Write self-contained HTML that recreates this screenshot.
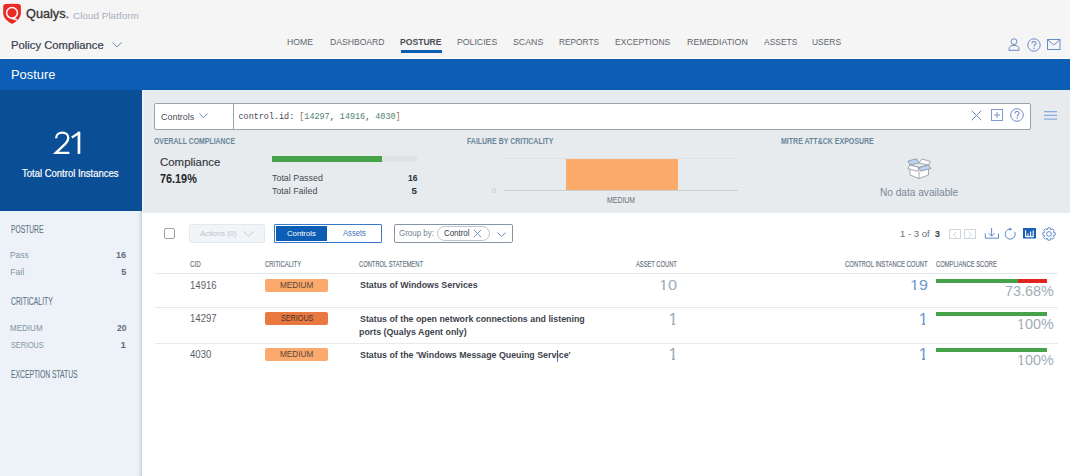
<!DOCTYPE html>
<html><head><meta charset="utf-8">
<style>
*{margin:0;padding:0;box-sizing:border-box;}
html,body{width:1070px;height:476px;overflow:hidden;background:#fff;font-family:"Liberation Sans",sans-serif;}
.a{position:absolute;white-space:nowrap;line-height:1;transform-origin:0 0;}
.r{position:absolute;}
svg{position:absolute;overflow:visible;}
</style></head><body>
<div class="r" style="left:0;top:0;width:1070px;height:59px;background:#f5f5f5;"></div><div class="r" style="left:0;top:58px;width:1070px;height:1px;background:#fdfdfd;"></div>
<div class="r" style="left:0;top:59px;width:1070px;height:31px;background:#0c5db4;"></div>
<div class="r" style="left:0;top:90px;width:142px;height:121px;background:#0a4e95;"></div>
<div class="r" style="left:142px;top:90px;width:928px;height:123px;background:#e7ebee;"></div><div class="r" style="left:142px;top:90px;width:1.5px;height:121px;background:#eef2f6;"></div>
<div class="r" style="left:0;top:211px;width:139px;height:265px;background:#edf2f8;"></div>
<div class="r" style="left:137px;top:211px;width:2px;height:265px;background:#e9eff8;"></div><div class="r" style="left:139px;top:211px;width:3px;height:265px;background:linear-gradient(to right,#e4eaf2,#d8dee6 50%,#c9d0d9);"></div>

<!-- logo -->
<svg style="left:0;top:0" width="26" height="28" viewBox="0 0 26 28">
  <path d="M3.2 6.2 Q3.2 4.3 5.2 4.1 Q12 3.3 18.9 4.1 Q20.9 4.3 20.9 6.2 L20.9 13.6 Q20.9 19.6 12.1 23.9 Q3.2 19.6 3.2 13.6 Z" fill="#ec2a25"/>
  <circle cx="12" cy="12.8" r="5.4" fill="none" stroke="#fff" stroke-width="1.5"/>
  <path d="M11.5 18.2 Q14.6 18.7 17 20" fill="none" stroke="#fff" stroke-width="1.6"/>
</svg>

<svg style="left:112px;top:42px" width="10" height="6" viewBox="0 0 10 6"><path d="M0.5 0.5 L5 5 L9.5 0.5" fill="none" stroke="#7b8fb0" stroke-width="1"/></svg>
<div class="r" style="left:401px;top:50px;width:41px;height:3px;background:#0c5db4;"></div>

<!-- top-right icons -->
<svg style="left:1008px;top:38px" width="12" height="13" viewBox="0 0 12 13">
  <circle cx="6" cy="3.6" r="2.9" fill="none" stroke="#6a8cc4" stroke-width="1"/>
  <path d="M1 12.3 L1 10.8 C1 8.6 3 7.4 6 7.4 C9 7.4 11 8.6 11 10.8 L11 12.3 Z" fill="none" stroke="#6a8cc4" stroke-width="1"/>
</svg>
<svg style="left:1027px;top:38px" width="14" height="14" viewBox="0 0 14 14">
  <circle cx="7" cy="7" r="6.2" fill="none" stroke="#6a8cc4" stroke-width="1"/>
  <path d="M5 5.4 C5 4.2 5.9 3.5 7 3.5 C8.1 3.5 9 4.2 9 5.3 C9 6.6 7.1 6.8 7.1 8.4" fill="none" stroke="#6a8cc4" stroke-width="1.1"/>
  <circle cx="7.1" cy="10.2" r="0.7" fill="#6a8cc4"/>
</svg>
<svg style="left:1047px;top:39px" width="14" height="11" viewBox="0 0 14 11">
  <rect x="0.5" y="0.5" width="12.5" height="10" fill="none" stroke="#6a8cc4" stroke-width="1"/>
  <path d="M0.5 0.7 L6.75 6 L13 0.7" fill="none" stroke="#6a8cc4" stroke-width="1"/>
</svg>

<!-- search -->
<div class="r" style="left:154px;top:103px;width:877px;height:27px;background:#fff;border:1px solid #97a3ad;border-radius:2px;"></div>
<div class="r" style="left:233px;top:104px;width:1px;height:25px;background:#97a3ad;"></div>
<svg style="left:199px;top:113px" width="10" height="6" viewBox="0 0 10 6"><path d="M0.5 0.5 L4.5 4.8 L8.5 0.5" fill="none" stroke="#6a8cc4" stroke-width="1"/></svg>
<svg style="left:971px;top:110px" width="11" height="11" viewBox="0 0 11 11"><path d="M0.7 0.7 L10.3 10.3 M10.3 0.7 L0.7 10.3" stroke="#6a8cc4" stroke-width="1"/></svg>
<svg style="left:991px;top:109px" width="12" height="12" viewBox="0 0 12 12"><rect x="0.5" y="0.5" width="11" height="11" fill="none" stroke="#7d9bd2" stroke-width="1"/><path d="M6 3 L6 9 M3 6 L9 6" stroke="#6a8cc4" stroke-width="0.9"/></svg>
<svg style="left:1010px;top:108px" width="14" height="14" viewBox="0 0 14 14">
  <circle cx="7" cy="7" r="6.3" fill="none" stroke="#6a8cc4" stroke-width="1"/>
  <path d="M5 5.4 C5 4.2 5.9 3.5 7 3.5 C8.1 3.5 9 4.2 9 5.3 C9 6.6 7.1 6.8 7.1 8.4" fill="none" stroke="#6a8cc4" stroke-width="1.1"/>
  <circle cx="7.1" cy="10.2" r="0.7" fill="#6a8cc4"/>
</svg>
<svg style="left:1044px;top:111px" width="13" height="9" viewBox="0 0 13 9"><path d="M0 0.7 H13 M0 4.4 H13 M0 8.1 H13" stroke="#86ade0" stroke-width="1.3"/></svg>

<!-- overall compliance -->
<div class="r" style="left:272px;top:156px;width:145px;height:6px;background:#dde2e6;"></div>
<div class="r" style="left:272px;top:156px;width:110px;height:6px;background:#46a34a;"></div>

<!-- failure chart -->
<div class="r" style="left:504px;top:158px;width:234px;height:1px;background:#dfe3e6;"></div>
<div class="r" style="left:504px;top:190px;width:234px;height:1px;background:#c9ced3;"></div>
<div class="r" style="left:566px;top:159px;width:112px;height:31px;background:#fbab69;"></div>

<!-- mitre -->
<svg style="left:907px;top:158px" width="25" height="22" viewBox="0 0 25 22">
  <path d="M3 7 L12 9.5 L21.5 7 L21.5 17 L12 20.5 L3 17 Z" fill="#fff" stroke="#858f99" stroke-width="0.75"/>
  <path d="M12 9.5 L12 20.5" stroke="#858f99" stroke-width="0.75"/>
  <path d="M3 7 L1 3 L9.5 0.8 L12 5 Z" fill="#bcd4ee" stroke="#858f99" stroke-width="0.75"/>
  <path d="M12 5 L15 1 L23.5 3.5 L21.5 7 Z" fill="#fff" stroke="#858f99" stroke-width="0.75"/>
  <path d="M3 7 L0.8 10.5 L10 13.2 L12 9.5 Z" fill="#fff" stroke="#858f99" stroke-width="0.75"/>
  <path d="M12 9.5 L14 13.2 L24 10.5 L21.5 7 Z" fill="#bcd4ee" stroke="#858f99" stroke-width="0.75"/>
</svg>

<!-- toolbar -->
<div class="r" style="left:164px;top:228px;width:11px;height:11px;border:1px solid #9aa2aa;border-radius:2px;background:#fff;"></div>
<div class="r" style="left:189px;top:224px;width:76px;height:19px;background:#f2f5f8;border:1px solid #e3e8ee;border-radius:2px;"></div>
<svg style="left:243px;top:231px" width="11" height="6" viewBox="0 0 11 6"><path d="M0.5 0.5 L5.5 5 L10.5 0.5" fill="none" stroke="#c3cad2" stroke-width="1"/></svg>
<div class="r" style="left:274px;top:224px;width:108px;height:19px;border:1px solid #3a79c9;border-radius:1px;background:#fff;"></div>
<div class="r" style="left:276px;top:226px;width:51px;height:15px;background:#0c5db4;"></div>
<div class="r" style="left:394px;top:224px;width:119px;height:19px;border:1px solid #8595a6;border-radius:2px;background:#fff;"></div>
<div class="r" style="left:437px;top:225.5px;width:53px;height:15px;border:1px solid #bcc5cf;border-radius:8px;background:#fff;"></div>
<svg style="left:473px;top:229px" width="9" height="9" viewBox="0 0 9 9"><path d="M0.8 0.8 L8.2 8.2 M8.2 0.8 L0.8 8.2" stroke="#6a8cc4" stroke-width="0.9"/></svg>
<svg style="left:497px;top:232px" width="9" height="6" viewBox="0 0 9 6"><path d="M0.5 0.5 L4.5 4.5 L8.5 0.5" fill="none" stroke="#5a7fb5" stroke-width="0.9"/></svg>

<div class="r" style="left:949px;top:229px;width:12px;height:10px;border:1px solid #cfd6dd;"></div>
<svg style="left:952px;top:231px" width="6" height="7" viewBox="0 0 6 7"><path d="M4.5 0.5 L1.5 3.5 L4.5 6.5" fill="none" stroke="#c2cad2" stroke-width="0.8"/></svg>
<div class="r" style="left:964px;top:229px;width:12px;height:10px;border:1px solid #cfd6dd;"></div>
<svg style="left:967px;top:231px" width="6" height="7" viewBox="0 0 6 7"><path d="M1.5 0.5 L4.5 3.5 L1.5 6.5" fill="none" stroke="#c2cad2" stroke-width="0.8"/></svg>
<svg style="left:984px;top:227px" width="16" height="13" viewBox="0 0 16 13"><path d="M1.3 6.5 V11.2 H14.5 V6.5" fill="none" stroke="#5d8ac8" stroke-width="1"/><path d="M7.6 1 V9.2 M4.6 6.2 L7.6 9.2 L10.6 6.2" fill="none" stroke="#5d8ac8" stroke-width="1"/></svg>
<svg style="left:1004px;top:228px" width="13" height="13" viewBox="0 0 13 13"><path d="M5.6 1.2 A5 5 0 1 0 10.6 3.8" fill="none" stroke="#5d8ac8" stroke-width="1"/><path d="M5.4 -0.4 L8.4 1.2 L5.4 2.8 Z" fill="#5d8ac8"/></svg>
<svg style="left:1023px;top:228px" width="13" height="11" viewBox="0 0 13 11"><rect width="13" height="10.5" fill="#1a5fb8"/><path d="M2.6 9 V2.2 M5 9 V5.5 M7.6 9 V3.5 M10.2 9 V2.5 M2.6 8.6 H10.4" fill="none" stroke="#fff" stroke-width="1.1"/></svg>
<svg style="left:1041.5px;top:226.5px" width="14" height="14" viewBox="0 0 14 14"><path d="M11.42 5.39 L13.18 5.80 L13.18 8.20 L11.42 8.61 L11.26 8.99 L12.22 10.52 L10.52 12.22 L8.99 11.26 L8.61 11.42 L8.20 13.18 L5.80 13.18 L5.39 11.42 L5.01 11.26 L3.48 12.22 L1.78 10.52 L2.74 8.99 L2.58 8.61 L0.82 8.20 L0.82 5.80 L2.58 5.39 L2.74 5.01 L1.78 3.48 L3.48 1.78 L5.01 2.74 L5.39 2.58 L5.80 0.82 L8.20 0.82 L8.61 2.58 L8.99 2.74 L10.52 1.78 L12.22 3.48 L11.26 5.01 Z" fill="none" stroke="#5d8ac8" stroke-width="0.95" stroke-linejoin="round"/><circle cx="7" cy="7" r="2.4" fill="none" stroke="#5d8ac8" stroke-width="0.95"/></svg>

<!-- table lines -->
<div class="r" style="left:155px;top:273px;width:903px;height:1px;background:#e6eaee;"></div>
<div class="r" style="left:155px;top:307px;width:903px;height:1px;background:#e6eaee;"></div>
<div class="r" style="left:155px;top:343px;width:903px;height:1px;background:#e6eaee;"></div>

<!-- badges -->
<div class="r" style="left:265px;top:279px;width:63px;height:13px;border-radius:2px;background:#fba96c;"></div>
<div class="r" style="left:265px;top:312px;width:63px;height:13px;border-radius:2px;background:#e8783f;"></div>
<div class="r" style="left:265px;top:348px;width:63px;height:13px;border-radius:2px;background:#fba96c;"></div>

<!-- score bars -->
<div class="r" style="left:936px;top:279px;width:82px;height:4px;background:#46a34a;"></div>
<div class="r" style="left:1018px;top:279px;width:29px;height:4px;background:#e3241e;"></div>
<div class="r" style="left:936px;top:312px;width:111px;height:4px;background:#46a34a;"></div>
<div class="r" style="left:936px;top:348px;width:111px;height:4px;background:#46a34a;"></div>

<!-- cursor -->
<div class="r" style="left:556.5px;top:350px;width:1px;height:12px;background:#4a86d8;"></div>

<svg style="left:50px;top:128px" width="36" height="30" viewBox="0 0 36 30">
  <path d="M6.1 10.2 C6.1 6.6 8.9 4.6 12.3 4.6 C15.8 4.6 18.3 6.8 18.3 9.9 C18.3 12.0 17.3 13.6 15.5 15.7 L5.8 24.8 H19.4" fill="none" stroke="#fff" stroke-width="2.3"/>
  <rect x="27.6" y="3.7" width="2.7" height="22.2" fill="#fff"/>
  <path d="M29.6 4.5 L21.8 9.5" fill="none" stroke="#fff" stroke-width="2.2"/>
</svg>
<div class="a" style="left:25.9px;top:8.05px;font-size:12.52px;color:#333333;transform:scaleX(1.015);-webkit-text-stroke:0.3px #333;">Qualys<span style="color:#8a8a8a">.</span></div>
<div class="a" style="left:72.7px;top:11.95px;font-size:9.33px;color:#a7b0bb;transform:scaleX(1.067);">Cloud Platform</div>
<div class="a" style="left:10.65px;top:39.8px;font-size:10.98px;color:#36414f;transform:scaleX(1.027);-webkit-text-stroke:0.2px #36414f;">Policy Compliance</div>
<div class="a" style="left:287.25px;top:38.2px;font-size:9.36px;color:#5f656d;transform:scaleX(0.926);">HOME</div>
<div class="a" style="left:329.75px;top:38.2px;font-size:9.36px;color:#5f656d;transform:scaleX(0.921);">DASHBOARD</div>
<div class="a" style="left:400.4px;top:38.2px;font-size:9.36px;font-weight:bold;color:#4a4f57;transform:scaleX(0.92);">POSTURE</div>
<div class="a" style="left:457.05px;top:38.2px;font-size:9.36px;color:#5f656d;transform:scaleX(0.933);">POLICIES</div>
<div class="a" style="left:513.4px;top:38.2px;font-size:9.36px;color:#5f656d;transform:scaleX(0.941);">SCANS</div>
<div class="a" style="left:559.45px;top:38.2px;font-size:9.36px;color:#5f656d;transform:scaleX(0.891);">REPORTS</div>
<div class="a" style="left:615.25px;top:38.2px;font-size:9.36px;color:#5f656d;transform:scaleX(0.919);">EXCEPTIONS</div>
<div class="a" style="left:686.85px;top:38.2px;font-size:9.36px;color:#5f656d;transform:scaleX(0.947);">REMEDIATION</div>
<div class="a" style="left:763.8px;top:38.2px;font-size:9.36px;color:#5f656d;transform:scaleX(0.907);">ASSETS</div>
<div class="a" style="left:812.45px;top:38.2px;font-size:9.36px;color:#5f656d;transform:scaleX(0.903);">USERS</div>
<div class="a" style="left:10.6px;top:69.15px;font-size:12.36px;color:#ffffff;transform:scaleX(1.044);">Posture</div>
<div class="a" style="left:22.05px;top:167.9px;font-size:10.5px;color:#ffffff;transform:scaleX(0.904);-webkit-text-stroke:0.2px #fff;">Total Control Instances</div>
<div class="a" style="left:160.6px;top:112.7px;font-size:9.0px;color:#4a5058;transform:scaleX(0.992);">Controls</div>
<div class="a" style="left:238.5px;top:112.65px;font-size:8.45px;font-family:'Liberation Mono',monospace;color:#3d4654;">control.id: <span style="color:#a0703a">[</span><span style="color:#4d7f70">14297</span>, <span style="color:#4d7f70">14916</span>, <span style="color:#4d7f70">4030</span><span style="color:#a0703a">]</span></div>
<div class="a" style="left:154.45px;top:136.65px;font-size:8.29px;font-weight:bold;color:#67869a;transform:scaleX(0.833);">OVERALL COMPLIANCE</div>
<div class="a" style="left:467.3px;top:136.9px;font-size:8.58px;font-weight:bold;color:#67869a;transform:scaleX(0.811);">FAILURE BY CRITICALITY</div>
<div class="a" style="left:781.2px;top:136.9px;font-size:8.44px;font-weight:bold;color:#67869a;transform:scaleX(0.833);">MITRE ATT&amp;CK EXPOSURE</div>
<div class="a" style="left:160.0px;top:156.6px;font-size:10.98px;color:#33383f;transform:scaleX(1.042);-webkit-text-stroke:0.15px #33383f;">Compliance</div>
<div class="a" style="left:160.2px;top:173.35px;font-size:12.34px;font-weight:bold;color:#25292e;transform:scaleX(0.88);">76.19%</div>
<div class="a" style="left:272.25px;top:174.2px;font-size:9.0px;color:#464b52;transform:scaleX(0.987);">Total Passed</div>
<div class="a" style="left:407.7px;top:174.2px;font-size:9.36px;font-weight:bold;color:#2e3338;transform:scaleX(0.905);">16</div>
<div class="a" style="left:272.25px;top:186.45px;font-size:9.42px;color:#464b52;transform:scaleX(0.942);">Total Failed</div>
<div class="a" style="left:411.55px;top:186.45px;font-size:9.79px;font-weight:bold;color:#2e3338;">5</div>
<div class="a" style="left:491.65px;top:187.3px;font-size:7.98px;color:#c3cad0;">0</div>
<div class="a" style="left:607.0px;top:196.4px;font-size:8.58px;color:#6a6f75;transform:scaleX(0.809);">MEDIUM</div>
<div class="a" style="left:880.35px;top:187.55px;font-size:10.0px;color:#7b8894;transform:scaleX(1.011);">No data available</div>
<div class="a" style="left:200.1px;top:229.85px;font-size:7.33px;color:#bac3cc;transform:scaleX(1.043);">Actions (0)</div>
<div class="a" style="left:286.6px;top:230.35px;font-size:8.07px;color:#ffffff;transform:scaleX(0.961);">Controls</div>
<div class="a" style="left:343.3px;top:230.45px;font-size:8.15px;color:#3f74bd;transform:scaleX(0.94);">Assets</div>
<div class="a" style="left:399.3px;top:230.1px;font-size:8.18px;color:#76828e;transform:scaleX(0.973);">Group by:</div>
<div class="a" style="left:444.1px;top:229.35px;font-size:8.43px;color:#353a42;transform:scaleX(0.935);">Control</div>
<div class="a" style="left:900.15px;top:229.9px;font-size:9.04px;color:#6b7178;transform:scaleX(1.058);">1 - 3 of</div>
<div class="a" style="left:934.85px;top:229.9px;font-size:9.36px;font-weight:bold;color:#3a3f45;">3</div>
<div class="a" style="left:189.75px;top:259.65px;font-size:8.96px;color:#66727e;transform:scaleX(0.697);-webkit-text-stroke:0.15px #66727e;">CID</div>
<div class="a" style="left:265.45px;top:259.65px;font-size:8.96px;color:#66727e;transform:scaleX(0.661);-webkit-text-stroke:0.15px #66727e;">CRITICALITY</div>
<div class="a" style="left:359.15px;top:259.65px;font-size:8.96px;color:#66727e;transform:scaleX(0.647);-webkit-text-stroke:0.15px #66727e;">CONTROL STATEMENT</div>
<div class="a" style="left:636.0px;top:259.65px;font-size:8.96px;color:#66727e;transform:scaleX(0.643);-webkit-text-stroke:0.15px #66727e;">ASSET COUNT</div>
<div class="a" style="left:845.35px;top:259.65px;font-size:8.96px;color:#66727e;transform:scaleX(0.662);-webkit-text-stroke:0.15px #66727e;">CONTROL INSTANCE COUNT</div>
<div class="a" style="left:936.15px;top:259.65px;font-size:8.96px;color:#66727e;transform:scaleX(0.652);-webkit-text-stroke:0.15px #66727e;">COMPLIANCE SCORE</div>
<div class="a" style="left:189.75px;top:279.5px;font-size:10.86px;color:#5b6066;transform:scaleX(0.883);">14916</div>
<div class="a" style="left:189.75px;top:313.45px;font-size:10.86px;color:#5b6066;transform:scaleX(0.883);">14297</div>
<div class="a" style="left:190.25px;top:349.15px;font-size:10.86px;color:#5b6066;transform:scaleX(0.883);">4030</div>
<div class="a" style="left:280.05px;top:280.75px;font-size:8.44px;color:#5a4636;transform:scaleX(0.974);">MEDIUM</div>
<div class="a" style="left:280.65px;top:313.7px;font-size:8.73px;color:#47352a;transform:scaleX(0.826);">SERIOUS</div>
<div class="a" style="left:280.05px;top:349.65px;font-size:8.44px;color:#5a4636;transform:scaleX(0.974);">MEDIUM</div>
<div class="a" style="left:359.65px;top:281.25px;font-size:9.28px;font-weight:bold;color:#3d444d;transform:scaleX(0.953);">Status of Windows Services</div>
<div class="a" style="left:359.65px;top:315.15px;font-size:9.28px;font-weight:bold;color:#3d444d;transform:scaleX(0.953);">Status of the open network connections and listening</div>
<div class="a" style="left:359.4px;top:328.35px;font-size:9.28px;font-weight:bold;color:#3d444d;transform:scaleX(0.953);">ports (Qualys Agent only)</div>
<div class="a" style="left:359.65px;top:350.95px;font-size:9.28px;font-weight:bold;color:#3d444d;transform:scaleX(0.953);">Status of the 'Windows Message Queuing Service'</div>
<div class="a" style="left:659.15px;top:278.2px;font-size:14.14px;color:#9eacb8;transform:scaleX(1.151);">10</div>
<div class="a" style="left:668.55px;top:311.25px;font-size:16.37px;color:#9eacb8;">1</div>
<div class="a" style="left:668.55px;top:345.55px;font-size:16.37px;color:#9eacb8;">1</div>
<div class="a" style="left:909.95px;top:276.95px;font-size:15.54px;color:#6e97cf;transform:scaleX(1.036);">19</div>
<div class="a" style="left:918.75px;top:311.25px;font-size:16.37px;color:#6e97cf;">1</div>
<div class="a" style="left:918.75px;top:345.55px;font-size:16.37px;color:#6e97cf;">1</div>
<div class="a" style="left:1004.95px;top:282.75px;font-size:15.21px;color:#a1adb8;transform:scaleX(0.943);">73.68%</div>
<div class="a" style="left:1016.8px;top:316.85px;font-size:14.65px;color:#a1adb8;transform:scaleX(0.978);">100%</div>
<div class="a" style="left:1016.8px;top:352.65px;font-size:14.79px;color:#a1adb8;transform:scaleX(0.971);">100%</div>
<div class="a" style="left:10.5px;top:223.5px;font-size:10.86px;color:#5d7287;transform:scaleX(0.617);-webkit-text-stroke:0.1px #5d7287;">POSTURE</div>
<div class="a" style="left:10.75px;top:296.25px;font-size:11.55px;color:#5d7287;transform:scaleX(0.592);-webkit-text-stroke:0.1px #5d7287;">CRITICALITY</div>
<div class="a" style="left:10.5px;top:368.65px;font-size:11.0px;color:#5d7287;transform:scaleX(0.614);-webkit-text-stroke:0.1px #5d7287;">EXCEPTION STATUS</div>
<div class="a" style="left:10.25px;top:250.3px;font-size:9.5px;color:#8193a3;transform:scaleX(0.885);">Pass</div>
<div class="a" style="left:116.4px;top:249.55px;font-size:9.5px;font-weight:bold;color:#5d6e7e;transform:scaleX(0.954);">16</div>
<div class="a" style="left:10.25px;top:268.35px;font-size:8.58px;color:#8193a3;">Fail</div>
<div class="a" style="left:121.25px;top:268.35px;font-size:8.93px;font-weight:bold;color:#5d6e7e;">5</div>
<div class="a" style="left:10.25px;top:322.65px;font-size:9.5px;color:#8193a3;transform:scaleX(0.846);">MEDIUM</div>
<div class="a" style="left:116.55px;top:322.9px;font-size:9.5px;font-weight:bold;color:#5d6e7e;transform:scaleX(0.9);">20</div>
<div class="a" style="left:10.5px;top:340.25px;font-size:9.79px;color:#8193a3;transform:scaleX(0.742);">SERIOUS</div>
<div class="a" style="left:120.55px;top:340.25px;font-size:9.79px;font-weight:bold;color:#5d6e7e;">1</div>
<div class="r" style="left:669px;top:323px;width:3px;height:2px;background:#ffffff;"></div>
<div class="r" style="left:675px;top:323px;width:2px;height:2px;background:#ffffff;"></div>
<div class="r" style="left:669px;top:358px;width:3px;height:2px;background:#ffffff;"></div>
<div class="r" style="left:675px;top:358px;width:2px;height:2px;background:#ffffff;"></div>
<div class="r" style="left:920px;top:323px;width:2px;height:2px;background:#ffffff;"></div>
<div class="r" style="left:925px;top:323px;width:3px;height:2px;background:#ffffff;"></div>
<div class="r" style="left:920px;top:358px;width:2px;height:2px;background:#ffffff;"></div>
<div class="r" style="left:925px;top:358px;width:3px;height:2px;background:#ffffff;"></div>
<div class="r" style="left:660px;top:289px;width:3px;height:1px;background:#ffffff;"></div>
<div class="r" style="left:665px;top:289px;width:3px;height:1px;background:#ffffff;"></div>
<div class="r" style="left:911px;top:289px;width:3px;height:1px;background:#ffffff;"></div>
<div class="r" style="left:916px;top:289px;width:3px;height:1px;background:#ffffff;"></div>
<div class="r" style="left:1018px;top:328px;width:2px;height:1px;background:#ffffff;"></div>
<div class="r" style="left:1023px;top:328px;width:2px;height:1px;background:#ffffff;"></div>
<div class="r" style="left:1018px;top:364px;width:2px;height:1px;background:#ffffff;"></div>
<div class="r" style="left:1023px;top:364px;width:2px;height:1px;background:#ffffff;"></div>
</body></html>
